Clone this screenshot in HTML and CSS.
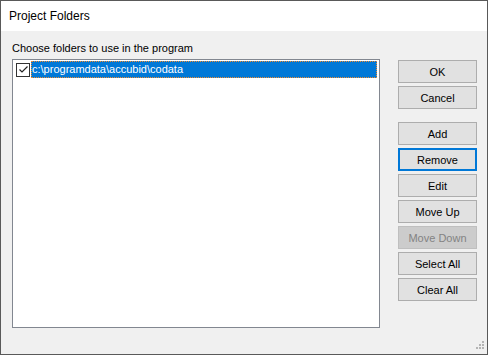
FILE: index.html
```html
<!DOCTYPE html>
<html>
<head>
<meta charset="utf-8">
<link rel="stylesheet" href="styles.css">
</head>
<body>
<div class="window">
  <div class="titlebar">Project Folders</div>
  <div class="content">
    <div class="left">
      <div class="label">Choose folders to use in the program</div>
      <div class="listbox">
        <div class="item">
          <span class="check"><svg width="11" height="11" viewBox="0 0 11 11"><path d="M1.5 5.5 L4 8 L9.5 2.5" fill="none" stroke="#222" stroke-width="1.2"/></svg></span>
          <span class="sel">c:\programdata\accubid\codata</span>
        </div>
      </div>
    </div>
    <div class="buttons">
      <button class="btn">OK</button>
      <button class="btn">Cancel</button>
      <button class="btn group">Add</button>
      <button class="btn focus">Remove</button>
      <button class="btn">Edit</button>
      <button class="btn">Move Up</button>
      <button class="btn disabled">Move Down</button>
      <button class="btn">Select All</button>
      <button class="btn">Clear All</button>
    </div>
    <div class="grip">
      <svg width="11" height="11" viewBox="0 0 11 11" fill="#b4b4b4">
        <rect x="8" y="0" width="2" height="2"/>
        <rect x="5" y="3" width="2" height="2"/><rect x="8" y="3" width="2" height="2"/>
        <rect x="2" y="6" width="2" height="2"/><rect x="5" y="6" width="2" height="2"/><rect x="8" y="6" width="2" height="2"/>
      </svg>
    </div>
  </div>
</div>
</body>
</html>
```

FILE: styles.css
```css
* { box-sizing: border-box; }
html, body { margin: 0; padding: 0; }
body { width: 488px; height: 355px; overflow: hidden; font-family: "Liberation Sans", Arial, sans-serif; }

.window {
  width: 488px;
  height: 355px;
  border: 1px solid #595959;
  background: #f0f0f0;
  display: flex;
  flex-direction: column;
}

.titlebar {
  height: 30px;
  background: #ffffff;
  color: #000;
  font-size: 12px;
  line-height: 30px;
  padding-left: 8px;
}

.content {
  flex: 1;
  position: relative;
  display: flex;
  padding-left: 11px;
}

.left {
  display: flex;
  flex-direction: column;
  padding-top: 11px;
}

.label {
  font-size: 11px;
  line-height: 13px;
  color: #000;
  height: 13px;
}

.listbox {
  margin-top: 4px;
  width: 368px;
  height: 269px;
  background: #fff;
  border: 1px solid #828790;
  padding: 1px 2px 0 2px;
}

.item {
  display: flex;
  align-items: center;
  height: 17px;
}

.check {
  width: 14px;
  height: 14px;
  border: 1px solid #333;
  background: #fff;
  display: flex;
  align-items: center;
  justify-content: center;
  margin-left: 1px;
}

.sel {
  flex: 1;
  margin-left: 1px;
  height: 17px;
  background: #0078d7;
  color: #fff;
  font-size: 11px;
  line-height: 15px;
  border: 1px dotted #f08c30;
}

.buttons {
  display: flex;
  flex-direction: column;
  gap: 3px;
  margin-left: 18px;
  padding-top: 29px;
}

.btn {
  width: 79px;
  height: 23px;
  margin: 0;
  padding: 0;
  background: #e1e1e1;
  border: 1px solid #adadad;
  font-family: "Liberation Sans", Arial, sans-serif;
  font-size: 11px;
  color: #000;
}

.btn.group { margin-top: 10px; }

.btn.focus { border: 2px solid #0078d7; }

.btn.disabled {
  background: #cccccc;
  border-color: #bfbfbf;
  color: #838383;
}

.grip {
  position: absolute;
  right: 2px;
  bottom: 2px;
  width: 11px;
  height: 11px;
  line-height: 0;
}
```
